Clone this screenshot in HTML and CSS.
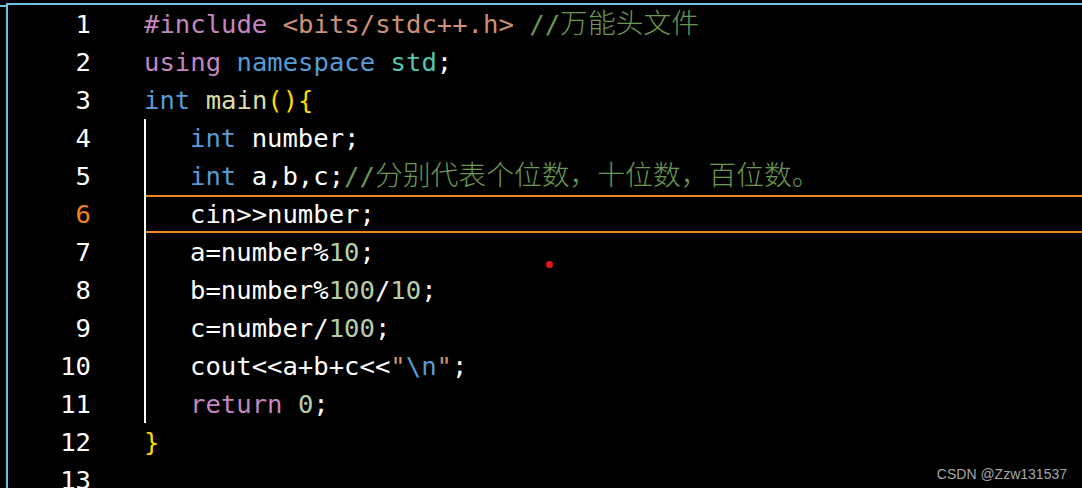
FILE: index.html
```html
<!DOCTYPE html>
<html>
<head>
<meta charset="utf-8">
<link rel="stylesheet" href="styles.css">
</head>
<body>
<div class="stub"></div>
<div class="editor">
  <div class="row"><span class="ln">1</span><span class="code"><span class="kw2">#include</span> <span class="str">&lt;bits/stdc++.h&gt;</span> <span class="cm">//<span class="cjk">万能头文件</span></span></span></div>
  <div class="row"><span class="ln">2</span><span class="code"><span class="kw2">using</span> <span class="kw">namespace</span> <span class="ty">std</span>;</span></div>
  <div class="row"><span class="ln">3</span><span class="code"><span class="kw">int</span> <span class="fn">main</span><span class="br">(){</span></span></div>
  <div class="row"><span class="ln">4</span><span class="code in"><span class="kw">int</span> number;</span></div>
  <div class="row"><span class="ln">5</span><span class="code in"><span class="kw">int</span> a,b,c;<span class="cm">//<span class="cjk">分别代表个位数，十位数，百位数。</span></span></span></div>
  <div class="row cur"><span class="ln">6</span><span class="code in">cin&gt;&gt;number;</span></div>
  <div class="row"><span class="ln">7</span><span class="code in">a=number%<span class="num">10</span>;</span></div>
  <div class="row"><span class="ln">8</span><span class="code in">b=number%<span class="num">100</span>/<span class="num">10</span>;</span></div>
  <div class="row"><span class="ln">9</span><span class="code in">c=number/<span class="num">100</span>;</span></div>
  <div class="row"><span class="ln">10</span><span class="code in">cout&lt;&lt;a+b+c&lt;&lt;<span class="str">"</span><span class="esc">\n</span><span class="str">"</span>;</span></div>
  <div class="row"><span class="ln">11</span><span class="code in"><span class="kw2">return</span> <span class="num">0</span>;</span></div>
  <div class="row"><span class="ln">12</span><span class="code"><span class="br">}</span></span></div>
  <div class="row"><span class="ln">13</span><span class="code"></span></div>
  <span class="dot"></span>
</div>
<div class="mark">CSDN @Zzw131537</div>
</body>
</html>
```
FILE: styles.css
```css
html, body {
  margin: 0;
  padding: 0;
  background: #000;
  width: 1082px;
  height: 488px;
  overflow: hidden;
}
body {
  position: relative;
}
.stub {
  position: absolute;
  left: 0;
  top: 5px;
  width: 6px;
  height: 2px;
  background: #6cbfdf;
}
.editor {
  position: relative;
  margin-left: 6px;
  margin-top: 3px;
  border-left: 2px solid #6cbfdf;
  border-top: 2px solid #6cbfdf;
  height: 500px;
  font-family: "DejaVu Sans Mono", "Liberation Mono", monospace;
  font-size: 25.6px;
  color: #ffffff;
}
.row {
  display: flex;
  height: 38px;
  line-height: 38px;
  white-space: pre;
}
.ln {
  width: 83px;
  text-align: right;
  flex: none;
  color: #ffffff;
}
.code {
  margin-left: 53px;
  flex: 1;
  box-sizing: border-box;
}
.code.in {
  padding-left: 46px;
  box-shadow: inset 2px 0 0 #ffffff;
}
.cur .ln {
  color: #f0841e;
}
.cur .code {
  box-shadow: inset 2px 0 0 #ffffff, inset 0 2px 0 #f0841e, inset 0 -2px 0 #f0841e;
}
.kw { color: #569cd6; }
.kw2 { color: #c586c0; }
.str { color: #ce9178; }
.esc { color: #569cd6; }
.cm { color: #6a9955; }
.ty { color: #4ec9b0; }
.fn { color: #dcdcaa; }
.br { color: #ffd700; }
.num { color: #b5cea8; }
.cjk {
  font-family: "Noto Sans CJK SC", sans-serif;
  font-size: 27.8px;
  font-weight: 300;
  line-height: 1;
}
.dot {
  position: absolute;
  left: 538px;
  top: 256px;
  width: 7px;
  height: 7px;
  border-radius: 50%;
  background: #e01818;
}
.mark {
  position: absolute;
  right: 15px;
  bottom: 6px;
  font-family: "Liberation Sans", Arial, sans-serif;
  font-size: 14px;
  color: #a8a8a8;
}
```
